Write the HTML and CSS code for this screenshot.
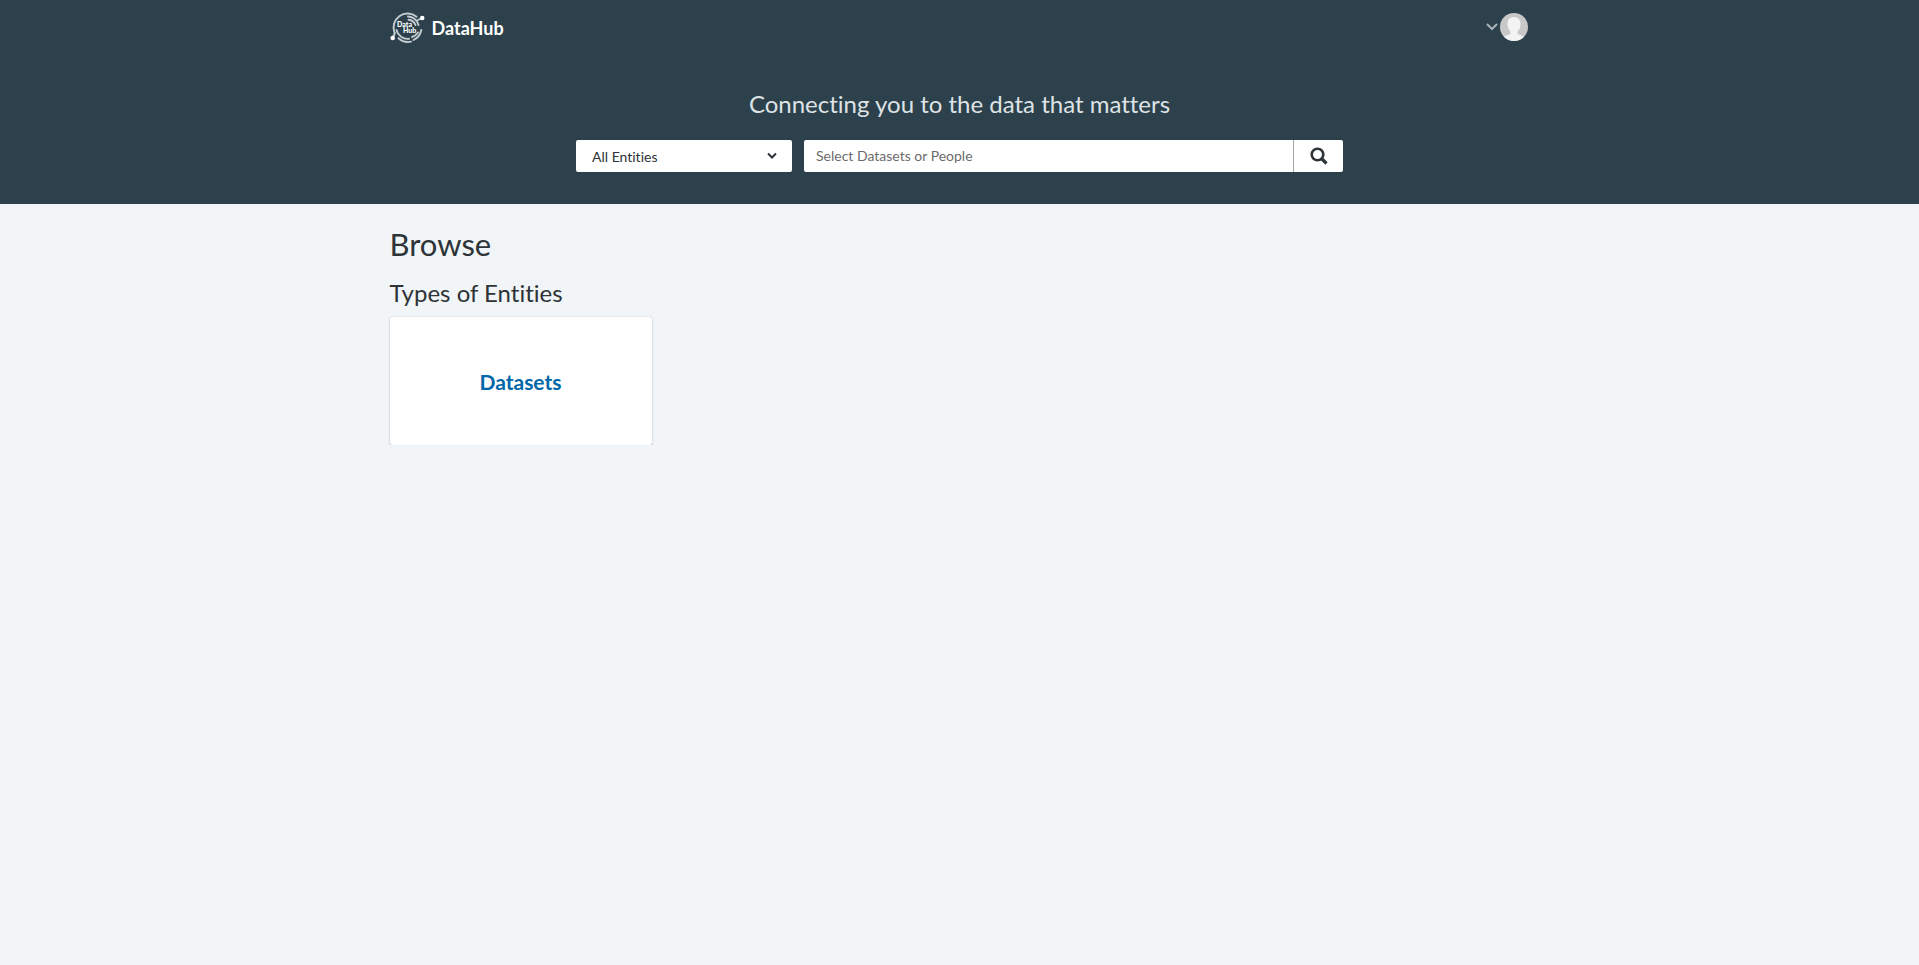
FILE: index.html
```html
<!DOCTYPE html>
<html lang="en">
<head>
    <meta charset="utf-8">
    <title>DataHub</title>
    <link rel="stylesheet" href="styles.css">
</head>

<body>
    <header class="header">
        <nav class="container navbar">
            <a class="brand" href="#">
                <svg class="brand-logo" viewBox="0 0 36 36" aria-hidden="true">
                    <g fill="none" stroke="#c3ccd1" stroke-width="1.9" stroke-linecap="round">
                        <path d="M26.500 6.800A14 14 0 0 0 4.500 22.700" />
                        <path d="M8.500 28.200A14 14 0 0 0 21 31.600" />
                        <path d="M18 6.500A11.500 11.500 0 0 1 28.500 15" />
                        <path d="M18.500 9.700A8.500 8.500 0 0 1 25.500 15" />
                        <path d="M6.500 20A11.500 11.500 0 0 0 19 28.800" />
                        <path d="M23.500 30A14 14 0 0 0 31.300 20" />
                        <path d="M22 27A11.500 11.500 0 0 0 28 22.500" />
                        <path d="M27 10.500L32 8M3 27L5 23" />
                    </g>
                    <circle cx="32.200" cy="8" r="2.300" fill="#fff" />
                    <circle cx="2.700" cy="28" r="2.300" fill="#fff" />
                    <text class="logo-text" x="7" y="17">Data</text>
                    <text class="logo-text" x="13" y="23">Hub</text>
                </svg>
                <span>DataHub</span>
            </a>
            <button class="user-menu" type="button" aria-label="User menu">
                <svg class="user-caret" viewBox="0 0 12 8" aria-hidden="true">
                    <path d="M1 1l5 5 5-5" fill="none" stroke="#aab3b7" stroke-width="2" />
                </svg>
                <svg class="avatar" viewBox="0 0 28 28" aria-hidden="true">
                    <rect width="28" height="28" fill="#c8c8c8" />
                    <path d="M14 4c-4.500 0-6.500 3-6.500 7 0 3 1 5.500 3 7.500v2c-1 1.500-5 1.500-7 4V28h21v-3.500c-2-2.500-6-2.500-7-4v-2c2-2 3-4.500 3-7.500 0-4-2-7-6.500-7z" fill="#f3f3f3" />
                </svg>
            </button>
        </nav>

        <div class="hero">
            <h2 class="hero-title">Connecting you to the data that matters</h2>
            <form class="search">
                <div class="select-wrap">
                    <select class="entity-select" aria-label="Entity type">
                        <option>All Entities</option>
                        <option>Datasets</option>
                        <option>People</option>
                    </select>
                    <svg class="select-caret" viewBox="0 0 10 8" aria-hidden="true">
                        <path d="M1 1.500l4 4 4-4" fill="none" stroke="#2d3336" stroke-width="2" />
                    </svg>
                </div>
                <div class="search-box">
                    <input class="search-input" type="text" placeholder="Select Datasets or People" aria-label="Search">
                    <button class="search-button" type="button" aria-label="Search">
                        <svg class="search-icon" viewBox="0 0 18 18" aria-hidden="true">
                            <circle cx="7.500" cy="7.500" r="5.800" fill="none" stroke="#2d3336" stroke-width="2.600" />
                            <path d="M11.500 11.500l5 5" stroke="#2d3336" stroke-width="3.200" />
                        </svg>
                    </button>
                </div>
            </form>
        </div>
    </header>

    <main class="container">
        <h1 class="page-title">Browse</h1>
        <h2 class="section-title">Types of Entities</h2>
        <div class="cards">
            <a class="card" href="#">Datasets</a>
        </div>
    </main>
</body>
</html>
```
FILE: styles.css
```css
* {
    box-sizing: border-box;
}

body {
    margin: 0;
    background-color: #f1f5f8;
    color: #2d3336;
    font-family: Lato, "Liberation Sans", sans-serif;
    font-size: 14px;
    font-variant-ligatures: none;
}

.container {
    max-width: 1140px;
    margin: 0 auto;
}

.header {
    background-color: #2c414c;
    padding-bottom: 32px;
}

.navbar {
    display: flex;
    align-items: center;
    justify-content: space-between;
    height: 56px;
}

.brand {
    display: flex;
    align-items: center;
    gap: 6px;
    color: #fff;
    font-size: 18px;
    font-weight: bold;
    text-decoration: none;
}

.brand-logo {
    width: 36px;
    height: 36px;
}

.logo-text {
    fill: #fff;
    font-size: 7px;
    font-weight: 900;
}

.user-menu {
    display: flex;
    align-items: center;
    gap: 2px;
    padding: 0 2px 2px 0;
    border: none;
    background: none;
}

.user-caret {
    width: 12px;
    height: 8px;
}

.avatar {
    width: 28px;
    height: 28px;
    border-radius: 50%;
}

.hero {
    max-width: 767px;
    margin: 0 auto;
    padding-top: 32px;
}

.hero-title {
    margin: 0 0 20px;
    color: #dfe3e6;
    font-size: 24px;
    font-weight: normal;
    line-height: 32px;
    text-align: center;
}

.search {
    display: flex;
    gap: 12px;
}

.select-wrap {
    position: relative;
    width: 216px;
}

.entity-select {
    appearance: none;
    width: 100%;
    height: 32px;
    padding: 0 32px 0 16px;
    border: none;
    border-radius: 2px;
    background-color: #fff;
    color: #2d3336;
    font: inherit;
}

.select-caret {
    position: absolute;
    top: 12px;
    right: 15px;
    width: 10px;
    height: 8px;
    pointer-events: none;
}

.search-box {
    display: flex;
    flex: 1;
    height: 32px;
    border-radius: 2px;
    background-color: #fff;
    overflow: hidden;
}

.search-input {
    flex: 1;
    padding: 0 12px 2px;
    border: none;
    background: none;
    font: inherit;
}

.search-input::placeholder {
    color: #6b6b6b;
}

.search-button {
    display: flex;
    align-items: center;
    justify-content: center;
    width: 50px;
    padding: 0;
    border: none;
    border-left: 1px solid #a5a5a5;
    background: none;
}

.search-icon {
    width: 18px;
    height: 18px;
}

.page-title {
    margin: 20px 0 13px;
    font-size: 31px;
    font-weight: normal;
    line-height: 40px;
}

.section-title {
    margin: 0 0 8px;
    font-size: 24px;
    font-weight: normal;
    line-height: 32px;
}

.cards {
    display: grid;
    grid-template-columns: repeat(4, 262px);
    gap: 30px;
}

.card {
    display: flex;
    align-items: center;
    justify-content: center;
    height: 128px;
    border-radius: 2px;
    background-color: #fff;
    box-shadow: 0 0 1px rgba(0, 0, 0, 0.3), 0 1px 2px rgba(0, 0, 0, 0.25);
    color: #0067a8;
    font-size: 21px;
    font-weight: bold;
    text-decoration: none;
}
```
